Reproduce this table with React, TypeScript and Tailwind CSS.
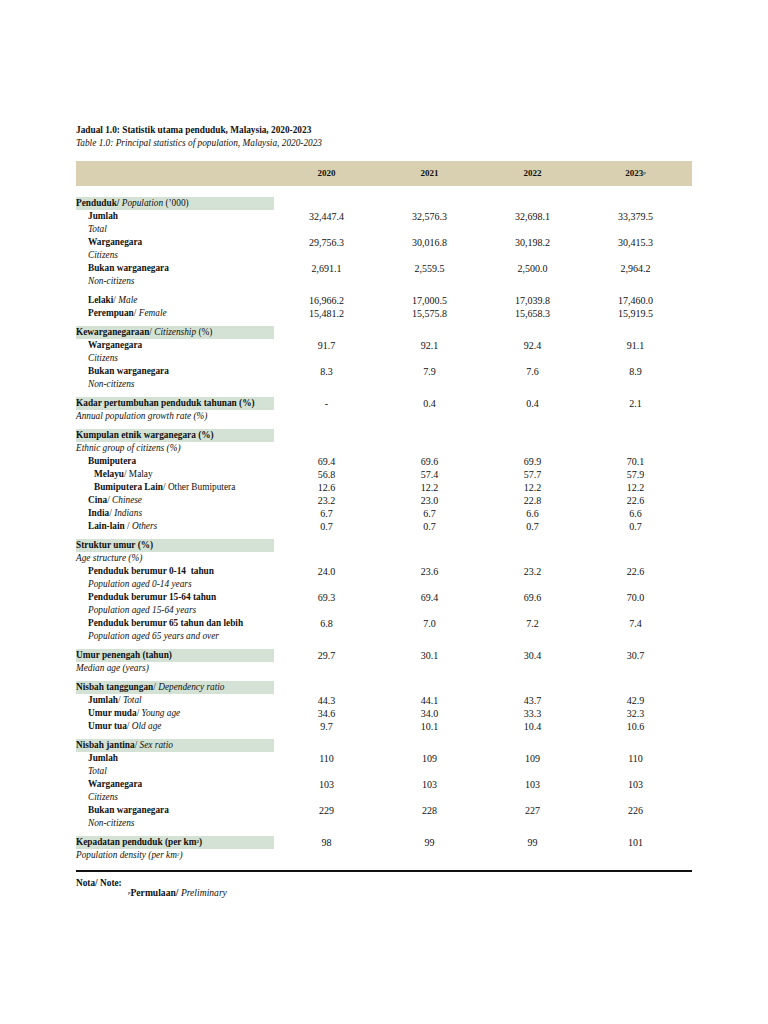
import React from "react";

type Row =
  | { t: "bar"; label: React.ReactNode; v?: string[] }
  | { t: "row"; label: React.ReactNode; ind?: number; v?: string[] }
  | { t: "sp" };

const B = ({ children }: { children: React.ReactNode }) => <span className="font-bold">{children}</span>;
const I = ({ children }: { children: React.ReactNode }) => <span className="italic">{children}</span>;

const rows: Row[] = [
  { t: "bar", label: <><B>Penduduk/</B> <I>Population</I> (’000)</> },
  { t: "row", ind: 12, label: <B>Jumlah</B>, v: ["32,447.4", "32,576.3", "32,698.1", "33,379.5"] },
  { t: "row", ind: 12, label: <I>Total</I> },
  { t: "row", ind: 12, label: <B>Warganegara</B>, v: ["29,756.3", "30,016.8", "30,198.2", "30,415.3"] },
  { t: "row", ind: 12, label: <I>Citizens</I> },
  { t: "row", ind: 12, label: <B>Bukan warganegara</B>, v: ["2,691.1", "2,559.5", "2,500.0", "2,964.2"] },
  { t: "row", ind: 12, label: <I>Non-citizens</I> },
  { t: "sp" },
  { t: "row", ind: 12, label: <><B>Lelaki</B>/ <I>Male</I></>, v: ["16,966.2", "17,000.5", "17,039.8", "17,460.0"] },
  { t: "row", ind: 12, label: <><B>Perempuan</B>/ <I>Female</I></>, v: ["15,481.2", "15,575.8", "15,658.3", "15,919.5"] },
  { t: "sp" },
  { t: "bar", label: <><B>Kewarganegaraan</B>/ <I>Citizenship</I> (%)</> },
  { t: "row", ind: 12, label: <B>Warganegara</B>, v: ["91.7", "92.1", "92.4", "91.1"] },
  { t: "row", ind: 12, label: <I>Citizens</I> },
  { t: "row", ind: 12, label: <B>Bukan warganegara</B>, v: ["8.3", "7.9", "7.6", "8.9"] },
  { t: "row", ind: 12, label: <I>Non-citizens</I> },
  { t: "sp" },
  { t: "bar", label: <B>Kadar pertumbuhan penduduk tahunan (%)</B>, v: ["-", "0.4", "0.4", "2.1"] },
  { t: "row", ind: 0, label: <I>Annual population growth rate (%)</I> },
  { t: "sp" },
  { t: "bar", label: <B>Kumpulan etnik warganegara (%)</B> },
  { t: "row", ind: 0, label: <I>Ethnic group of citizens (%)</I> },
  { t: "row", ind: 12, label: <B>Bumiputera</B>, v: ["69.4", "69.6", "69.9", "70.1"] },
  { t: "row", ind: 18, label: <><B>Melayu</B>/ Malay</>, v: ["56.8", "57.4", "57.7", "57.9"] },
  { t: "row", ind: 18, label: <><B>Bumiputera Lain</B>/ Other Bumiputera</>, v: ["12.6", "12.2", "12.2", "12.2"] },
  { t: "row", ind: 12, label: <><B>Cina</B>/ <I>Chinese</I></>, v: ["23.2", "23.0", "22.8", "22.6"] },
  { t: "row", ind: 12, label: <><B>India</B>/ <I>Indians</I></>, v: ["6.7", "6.7", "6.6", "6.6"] },
  { t: "row", ind: 12, label: <><B>Lain-lain</B> / <I>Others</I></>, v: ["0.7", "0.7", "0.7", "0.7"] },
  { t: "sp" },
  { t: "bar", label: <B>Struktur umur (%)</B> },
  { t: "row", ind: 0, label: <I>Age structure (%)</I> },
  { t: "row", ind: 12, label: <B>Penduduk berumur 0-14&nbsp; tahun</B>, v: ["24.0", "23.6", "23.2", "22.6"] },
  { t: "row", ind: 12, label: <I>Population aged 0-14 years</I> },
  { t: "row", ind: 12, label: <B>Penduduk berumur 15-64 tahun</B>, v: ["69.3", "69.4", "69.6", "70.0"] },
  { t: "row", ind: 12, label: <I>Population aged 15-64 years</I> },
  { t: "row", ind: 12, label: <B>Penduduk berumur 65 tahun dan lebih</B>, v: ["6.8", "7.0", "7.2", "7.4"] },
  { t: "row", ind: 12, label: <I>Population aged 65 years and over</I> },
  { t: "sp" },
  { t: "bar", label: <B>Umur penengah (tahun)</B>, v: ["29.7", "30.1", "30.4", "30.7"] },
  { t: "row", ind: 0, label: <I>Median age (years)</I> },
  { t: "sp" },
  { t: "bar", label: <><B>Nisbah tanggungan</B>/ <I>Dependency ratio</I></> },
  { t: "row", ind: 12, label: <><B>Jumlah</B>/ <I>Total</I></>, v: ["44.3", "44.1", "43.7", "42.9"] },
  { t: "row", ind: 12, label: <><B>Umur muda</B>/ <I>Young age</I></>, v: ["34.6", "34.0", "33.3", "32.3"] },
  { t: "row", ind: 12, label: <><B>Umur tua</B>/ <I>Old age</I></>, v: ["9.7", "10.1", "10.4", "10.6"] },
  { t: "sp" },
  { t: "bar", label: <><B>Nisbah jantina</B>/ <I>Sex ratio</I></> },
  { t: "row", ind: 12, label: <B>Jumlah</B>, v: ["110", "109", "109", "110"] },
  { t: "row", ind: 12, label: <I>Total</I> },
  { t: "row", ind: 12, label: <B>Warganegara</B>, v: ["103", "103", "103", "103"] },
  { t: "row", ind: 12, label: <I>Citizens</I> },
  { t: "row", ind: 12, label: <B>Bukan warganegara</B>, v: ["229", "228", "227", "226"] },
  { t: "row", ind: 12, label: <I>Non-citizens</I> },
  { t: "sp" },
  { t: "bar", label: <B>Kepadatan penduduk (per km<sup className="text-[5px]">2</sup>)</B>, v: ["98", "99", "99", "101"] },
  { t: "row", ind: 0, label: <I>Population density (per km<sup className="text-[5px]">2</sup>)</I> },
];

function Values({ v }: { v?: string[] }) {
  return (
    <>
      {[0, 1, 2, 3].map((i) => (
        <div key={i} className="text-center text-[10px]">
          {v ? v[i] : ""}
        </div>
      ))}
    </>
  );
}

export default function App() {
  return (
    <div className="w-[768px] h-[1024px] bg-white text-[#111] font-['Liberation_Serif',serif] text-[9.3px] leading-[13px]">
      <div className="pl-[76px] pr-[76px] pt-[124px]">
        <div className="font-bold">Jadual 1.0: Statistik utama penduduk, Malaysia, 2020-2023</div>
        <div className="italic">Table 1.0: Principal statistics of population, Malaysia, 2020-2023</div>

        <div className="mt-[11px] h-[25px] bg-[#d8d0b1] grid grid-cols-[199px_103px_103px_103px_103px] items-center font-bold text-[9px]">
          <div />
          <div className="text-center">2020</div>
          <div className="text-center">2021</div>
          <div className="text-center">2022</div>
          <div className="text-center">
            2023<sup className="text-[5px] font-normal">p</sup>
          </div>
        </div>

        <div className="mt-[11px] flex flex-col">
          {rows.map((r, idx) => {
            if (r.t === "sp") return <div key={idx} className="h-[6px]" />;
            if (r.t === "bar")
              return (
                <div key={idx} className="h-[13px] grid grid-cols-[199px_103px_103px_103px_103px] whitespace-nowrap">
                  <div className="bg-[#d3e2d5] w-[198px]">{r.label}</div>
                  <Values v={r.v} />
                </div>
              );
            return (
              <div key={idx} className="h-[13px] grid grid-cols-[199px_103px_103px_103px_103px] whitespace-nowrap">
                <div
                  className={
                    r.ind === 18 ? "pl-[18px]" : r.ind === 12 ? "pl-[12px]" : "pl-0"
                  }
                >
                  {r.label}
                </div>
                <Values v={r.v} />
              </div>
            );
          })}
        </div>

        <div className="mt-[8px] h-[2px] bg-[#111]" />
        <div className="mt-[6px] leading-[10px] font-bold">Nota/ Note:</div>
        <div className="leading-[10px] pl-[52px] text-[9.6px]">
          <sup className="text-[5px]">p</sup>
          <span className="font-bold">Permulaan/</span> <span className="italic">Preliminary</span>
        </div>
      </div>
    </div>
  );
}
